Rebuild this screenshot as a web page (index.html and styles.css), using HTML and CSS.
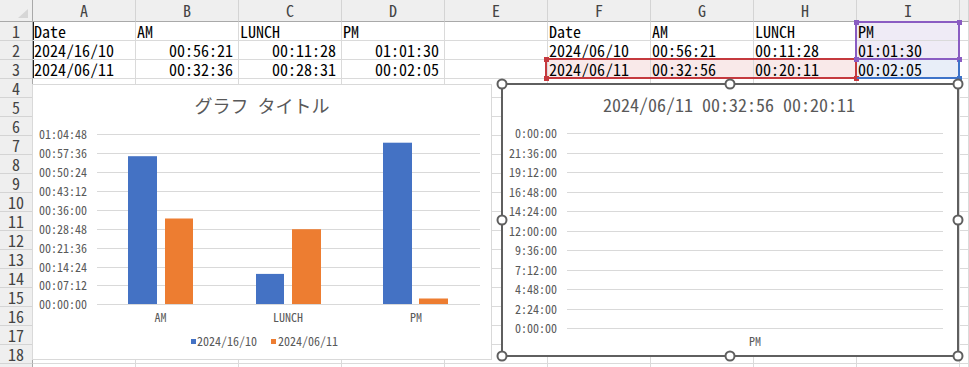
FILE: index.html
```html
<!DOCTYPE html>
<html lang="ja">
<head>
<meta charset="utf-8">
<title>Sheet</title>
<link rel="stylesheet" href="styles.css">
</head>
<body>
<div class="sheet">
  <div class="corner"><span class="tri"></span></div>
  <div class="ch">A</div><div class="ch">B</div><div class="ch">C</div><div class="ch">D</div><div class="ch">E</div>
  <div class="ch">F</div><div class="ch">G</div><div class="ch">H</div><div class="ch">I</div><div class="ch"></div>

  <div class="rh">1</div>
  <div class="c mark">Date</div><div class="c">AM</div><div class="c">LUNCH</div><div class="c">PM</div><div class="c"></div>
  <div class="c">Date</div><div class="c">AM</div><div class="c">LUNCH</div><div class="c fill-purple">PM</div><div class="c"></div>

  <div class="rh">2</div>
  <div class="c mark">2024/16/10</div><div class="c r">00:56:21</div><div class="c r">00:11:28</div><div class="c r">01:01:30</div><div class="c"></div>
  <div class="c">2024/06/10</div><div class="c">00:56:21</div><div class="c">00:11:28</div><div class="c fill-purple">01:01:30</div><div class="c"></div>

  <div class="rh">3</div>
  <div class="c mark">2024/06/11</div><div class="c r">00:32:36</div><div class="c r">00:28:31</div><div class="c r">00:02:05</div><div class="c"></div>
  <div class="c fill-red">2024/06/11</div><div class="c fill-red">00:32:56</div><div class="c fill-red">00:20:11</div><div class="c fill-blue">00:02:05</div><div class="c"></div>

  <div class="rh">4</div><div class="c"></div><div class="c"></div><div class="c"></div><div class="c"></div><div class="c"></div><div class="c"></div><div class="c"></div><div class="c"></div><div class="c"></div><div class="c"></div>
  <div class="rh">5</div><div class="c"></div><div class="c"></div><div class="c"></div><div class="c"></div><div class="c"></div><div class="c"></div><div class="c"></div><div class="c"></div><div class="c"></div><div class="c"></div>
  <div class="rh">6</div><div class="c"></div><div class="c"></div><div class="c"></div><div class="c"></div><div class="c"></div><div class="c"></div><div class="c"></div><div class="c"></div><div class="c"></div><div class="c"></div>
  <div class="rh">7</div><div class="c"></div><div class="c"></div><div class="c"></div><div class="c"></div><div class="c"></div><div class="c"></div><div class="c"></div><div class="c"></div><div class="c"></div><div class="c"></div>
  <div class="rh">8</div><div class="c"></div><div class="c"></div><div class="c"></div><div class="c"></div><div class="c"></div><div class="c"></div><div class="c"></div><div class="c"></div><div class="c"></div><div class="c"></div>
  <div class="rh">9</div><div class="c"></div><div class="c"></div><div class="c"></div><div class="c"></div><div class="c"></div><div class="c"></div><div class="c"></div><div class="c"></div><div class="c"></div><div class="c"></div>
  <div class="rh">10</div><div class="c"></div><div class="c"></div><div class="c"></div><div class="c"></div><div class="c"></div><div class="c"></div><div class="c"></div><div class="c"></div><div class="c"></div><div class="c"></div>
  <div class="rh">11</div><div class="c"></div><div class="c"></div><div class="c"></div><div class="c"></div><div class="c"></div><div class="c"></div><div class="c"></div><div class="c"></div><div class="c"></div><div class="c"></div>
  <div class="rh">12</div><div class="c"></div><div class="c"></div><div class="c"></div><div class="c"></div><div class="c"></div><div class="c"></div><div class="c"></div><div class="c"></div><div class="c"></div><div class="c"></div>
  <div class="rh">13</div><div class="c"></div><div class="c"></div><div class="c"></div><div class="c"></div><div class="c"></div><div class="c"></div><div class="c"></div><div class="c"></div><div class="c"></div><div class="c"></div>
  <div class="rh">14</div><div class="c"></div><div class="c"></div><div class="c"></div><div class="c"></div><div class="c"></div><div class="c"></div><div class="c"></div><div class="c"></div><div class="c"></div><div class="c"></div>
  <div class="rh">15</div><div class="c"></div><div class="c"></div><div class="c"></div><div class="c"></div><div class="c"></div><div class="c"></div><div class="c"></div><div class="c"></div><div class="c"></div><div class="c"></div>
  <div class="rh">16</div><div class="c"></div><div class="c"></div><div class="c"></div><div class="c"></div><div class="c"></div><div class="c"></div><div class="c"></div><div class="c"></div><div class="c"></div><div class="c"></div>
  <div class="rh">17</div><div class="c"></div><div class="c"></div><div class="c"></div><div class="c"></div><div class="c"></div><div class="c"></div><div class="c"></div><div class="c"></div><div class="c"></div><div class="c"></div>
  <div class="rh">18</div><div class="c"></div><div class="c"></div><div class="c"></div><div class="c"></div><div class="c"></div><div class="c"></div><div class="c"></div><div class="c"></div><div class="c"></div><div class="c"></div>
  <div class="rh">19</div><div class="c"></div><div class="c"></div><div class="c"></div><div class="c"></div><div class="c"></div><div class="c"></div><div class="c"></div><div class="c"></div><div class="c"></div><div class="c"></div>

  <!-- reference range highlights (drawn over the cells) -->
  <div class="rng rng-red">
    <span class="hd hd-tl"></span><span class="hd hd-tr"></span><span class="hd hd-bl"></span><span class="hd hd-br"></span>
  </div>
  <div class="rng rng-purple">
    <span class="hd hd-tl"></span><span class="hd hd-tr"></span><span class="hd hd-bl"></span><span class="hd hd-br"></span>
  </div>
  <div class="rng rng-blue">
    <span class="hd hd-br"></span>
  </div>

  <!-- left chart -->
  <svg class="chart chart-left" width="460" height="276" viewBox="32 84 460 276">
    <rect class="frame-light" x="32.5" y="84.5" width="459" height="275"/>
    <text class="title" x="262" y="113">グラフ タイトル</text>
    <g class="grid">
      <line x1="97" x2="480" y1="134.5" y2="134.5"/>
      <line x1="97" x2="480" y1="153.5" y2="153.5"/>
      <line x1="97" x2="480" y1="172.5" y2="172.5"/>
      <line x1="97" x2="480" y1="191.5" y2="191.5"/>
      <line x1="97" x2="480" y1="210.5" y2="210.5"/>
      <line x1="97" x2="480" y1="229.5" y2="229.5"/>
      <line x1="97" x2="480" y1="248.5" y2="248.5"/>
      <line x1="97" x2="480" y1="267.5" y2="267.5"/>
      <line x1="97" x2="480" y1="285.5" y2="285.5"/>
    </g>
    <g class="ylab">
      <text x="87" y="139">01:04:48</text>
      <text x="87" y="158">00:57:36</text>
      <text x="87" y="177">00:50:24</text>
      <text x="87" y="196">00:43:12</text>
      <text x="87" y="215">00:36:00</text>
      <text x="87" y="234">00:28:48</text>
      <text x="87" y="253">00:21:36</text>
      <text x="87" y="272">00:14:24</text>
      <text x="87" y="290">00:07:12</text>
      <text x="87" y="309">00:00:00</text>
    </g>
    <g>
      <rect class="s1" x="128" y="156.2" width="29" height="147.8"/>
      <rect class="s2" x="165" y="218.5" width="28" height="85.5"/>
      <rect class="s1" x="256" y="273.9" width="28" height="30.1"/>
      <rect class="s2" x="292" y="229.2" width="29" height="74.8"/>
      <rect class="s1" x="383" y="142.7" width="29" height="161.3"/>
      <rect class="s2" x="419" y="298.5" width="29" height="5.5"/>
    </g>
    <line class="axis" x1="97" x2="480" y1="304.5" y2="304.5"/>
    <g class="xlab">
      <text x="160.5" y="321.5">AM</text>
      <text x="288" y="321.5">LUNCH</text>
      <text x="416" y="321.5">PM</text>
    </g>
    <g class="legend">
      <rect class="s1" x="191" y="339" width="5" height="5"/>
      <text x="197" y="346">2024/16/10</text>
      <rect class="s2" x="271" y="339" width="5" height="5"/>
      <text x="278" y="346">2024/06/11</text>
    </g>
  </svg>

  <!-- right chart (selected) -->
  <svg class="chart chart-right" width="458" height="274" viewBox="501 83 458 274">
    <rect class="frame-dark" x="502" y="84" width="456" height="272"/>
    <text class="title" x="729" y="111.5">2024/06/11 00:32:56 00:20:11</text>
    <g class="grid">
      <line x1="567" x2="943" y1="133.5" y2="133.5"/>
      <line x1="567" x2="943" y1="153.5" y2="153.5"/>
      <line x1="567" x2="943" y1="172.5" y2="172.5"/>
      <line x1="567" x2="943" y1="192.5" y2="192.5"/>
      <line x1="567" x2="943" y1="211.5" y2="211.5"/>
      <line x1="567" x2="943" y1="231.5" y2="231.5"/>
      <line x1="567" x2="943" y1="250.5" y2="250.5"/>
      <line x1="567" x2="943" y1="270.5" y2="270.5"/>
      <line x1="567" x2="943" y1="289.5" y2="289.5"/>
      <line x1="567" x2="943" y1="309.5" y2="309.5"/>
      <line x1="567" x2="943" y1="328.5" y2="328.5"/>
    </g>
    <g class="ylab">
      <text x="557" y="138">0:00:00</text>
      <text x="557" y="157.5">21:36:00</text>
      <text x="557" y="177">19:12:00</text>
      <text x="557" y="196.5">16:48:00</text>
      <text x="557" y="216">14:24:00</text>
      <text x="557" y="235.5">12:00:00</text>
      <text x="557" y="255">9:36:00</text>
      <text x="557" y="274.5">7:12:00</text>
      <text x="557" y="294">4:48:00</text>
      <text x="557" y="313.5">2:24:00</text>
      <text x="557" y="333">0:00:00</text>
    </g>
    <text class="xlab" x="755" y="345.5">PM</text>
    <g class="handles">
      <circle cx="502" cy="84" r="4.5"/>
      <circle cx="730" cy="84" r="4.5"/>
      <circle cx="958" cy="84" r="4.5"/>
      <circle cx="502" cy="220" r="4.5"/>
      <circle cx="958" cy="220" r="4.5"/>
      <circle cx="502" cy="356" r="4.5"/>
      <circle cx="730" cy="356" r="4.5"/>
      <circle cx="958" cy="356" r="4.5"/>
    </g>
  </svg>
</div>
</body>
</html>
```
FILE: styles.css
```css
html, body {
  margin: 0;
  padding: 0;
  background: #ffffff;
}

.sheet {
  position: relative;
  display: grid;
  grid-template-columns: 33px repeat(9, 103px) 9px;
  grid-template-rows: 22px repeat(19, 19px);
  width: 969px;
  height: 367px;
  overflow: hidden;
  font-family: "Noto Sans Mono CJK JP", "Noto Sans CJK JP", "DejaVu Sans Mono", monospace;
  font-size: 16px;
  color: #000;
}

.corner {
  position: relative;
  box-sizing: border-box;
  background: #efefef;
  border-right: 1px solid #a9a9a9;
  border-bottom: 1px solid #a9a9a9;
}

.tri {
  position: absolute;
  right: 4px;
  bottom: 3px;
  width: 0;
  height: 0;
  border-left: 10px solid transparent;
  border-bottom: 9px solid #d6d6d6;
}

.ch {
  box-sizing: border-box;
  background: #efefef;
  border-right: 1px solid #d4d4d4;
  border-bottom: 1px solid #a9a9a9;
  color: #444;
  text-align: center;
  line-height: 21px;
  font-size: 16px;
  font-weight: 300;
}

.rh {
  box-sizing: border-box;
  background: #efefef;
  border-right: 1px solid #a9a9a9;
  border-bottom: 1px solid #d4d4d4;
  color: #444;
  text-align: center;
  line-height: 18px;
  font-size: 16px;
  font-weight: 300;
}

.c {
  box-sizing: border-box;
  border-right: 1px solid #dadada;
  border-bottom: 1px solid #dadada;
  padding: 0 5px 0 1px;
  line-height: 18px;
  white-space: nowrap;
  overflow: hidden;
}

.c.r {
  text-align: right;
}

.c.mark {
  box-shadow: inset 1px 0 0 #202020;
}

.fill-red { background: #f9e9e9; }
.fill-purple { background: #efebf6; }
.fill-blue { background: #e8eef8; }

/* range highlight borders, drawn over the cells */
.rng {
  position: absolute;
  box-sizing: border-box;
  pointer-events: none;
}

.rng-red {
  left: 545px;
  top: 58px;
  width: 312px;
  height: 21px;
  border: 2px solid #c5393e;
}

.rng-purple {
  left: 855px;
  top: 21px;
  width: 105px;
  height: 39px;
  border: 2px solid #8a5cc2;
}

.rng-blue {
  left: 857px;
  top: 60px;
  width: 103px;
  height: 19px;
  border-right: 2px solid #3d73c9;
  border-bottom: 2px solid #3d73c9;
}

.hd {
  position: absolute;
  width: 5px;
  height: 5px;
}

.rng-red .hd { background: #c5393e; }
.rng-purple .hd { background: #8a5cc2; }
.rng-blue .hd { background: #3d73c9; }

.hd-tl { left: -3.5px; top: -3.5px; }
.hd-tr { right: -3.5px; top: -3.5px; }
.hd-bl { left: -3.5px; bottom: -3.5px; }
.hd-br { right: -3.5px; bottom: -3.5px; }

/* charts float over the cells */
.chart {
  position: absolute;
  overflow: visible;
  font-family: "Noto Sans Mono CJK JP", "Noto Sans CJK JP", "DejaVu Sans Mono", monospace;
}

.chart-left {
  left: 32px;
  top: 84px;
}

.chart-right {
  left: 501px;
  top: 83px;
}

.frame-light {
  fill: #ffffff;
  stroke: #d9d9d9;
  stroke-width: 1;
}

.frame-dark {
  fill: #ffffff;
  stroke: #5f5f5f;
  stroke-width: 2;
}

.title {
  font-size: 18px;
  fill: #595959;
  text-anchor: middle;
  font-weight: 300;
}

.grid line {
  stroke: #d9d9d9;
  stroke-width: 1;
}

.axis {
  stroke: #d9d9d9;
  stroke-width: 1;
}

.ylab text {
  font-size: 12px;
  fill: #595959;
  text-anchor: end;
}

.xlab text,
text.xlab {
  font-size: 12px;
  fill: #595959;
  text-anchor: middle;
}

.legend text {
  font-size: 12px;
  fill: #595959;
}

.s1 { fill: #4472c4; }
.s2 { fill: #ed7d31; }

.handles circle {
  fill: #ffffff;
  stroke: #5f5f5f;
  stroke-width: 2;
}
```
